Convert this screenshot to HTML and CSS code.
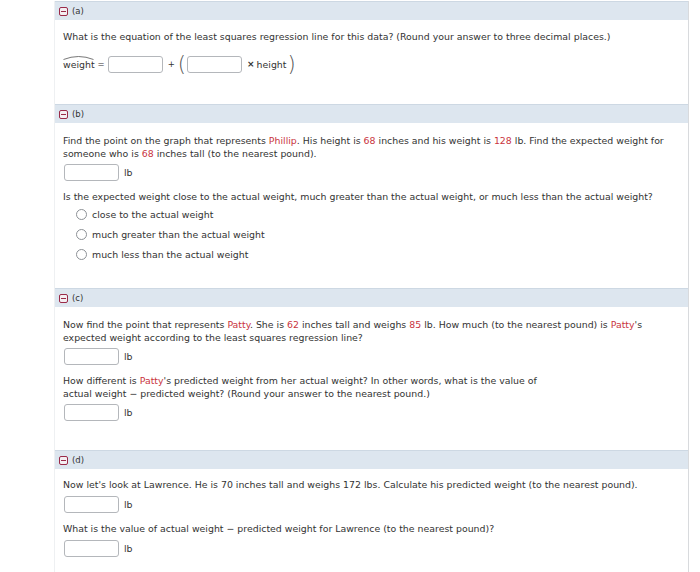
FILE: index.html
```html
<!DOCTYPE html>
<html>
<head>
<meta charset="utf-8">
<link rel="stylesheet" href="styles.css">
</head>
<body>
<div class="panel">
  <section class="part part-a">
    <div class="part-head"><span class="toggle"></span><span class="label">(a)</span></div>
    <div class="part-body">
      <p class="line">What is the equation of the least squares regression line for this data? (Round your answer to three decimal places.)</p>
      <div class="eq">
        <span class="hat"><svg class="hat-svg" width="31" height="5" viewBox="0 0 31 5"><path d="M0.5 4.5 Q15.5 -1.5 30.5 4.5" fill="none" stroke="#555" stroke-width="0.8"/></svg><span>weight</span></span>
        <span class="eq-sym">=</span>
        <span class="box box-eq"></span>
        <span class="eq-plus">+</span>
        <span class="paren">(</span>
        <span class="box box-eq"></span>
        <span class="times">×</span><span class="eq-word">height</span>
        <span class="paren paren-r">)</span>
      </div>
    </div>
  </section>

  <section class="part part-b">
    <div class="part-head"><span class="toggle"></span><span class="label">(b)</span></div>
    <div class="part-body">
      <p class="line">Find the point on the graph that represents <span class="red">Phillip</span>. His height is <span class="red">68</span> inches and his weight is <span class="red">128</span> lb. Find the expected weight for<br>someone who is <span class="red">68</span> inches tall (to the nearest pound).</p>
      <div class="answer"><span class="box"></span><span class="unit">lb</span></div>
      <p class="line q2">Is the expected weight close to the actual weight, much greater than the actual weight, or much less than the actual weight?</p>
      <ul class="radios">
        <li><span class="radio"></span>close to the actual weight</li>
        <li><span class="radio"></span>much greater than the actual weight</li>
        <li><span class="radio"></span>much less than the actual weight</li>
      </ul>
    </div>
  </section>

  <section class="part part-c">
    <div class="part-head"><span class="toggle"></span><span class="label">(c)</span></div>
    <div class="part-body">
      <p class="line">Now find the point that represents <span class="red">Patty</span>. She is <span class="red">62</span> inches tall and weighs <span class="red">85</span> lb. How much (to the nearest pound) is <span class="red">Patty</span>'s<br>expected weight according to the least squares regression line?</p>
      <div class="answer"><span class="box"></span><span class="unit">lb</span></div>
      <p class="line q2">How different is <span class="red">Patty</span>'s predicted weight from her actual weight? In other words, what is the value of<br>actual weight − predicted weight? (Round your answer to the nearest pound.)</p>
      <div class="answer"><span class="box"></span><span class="unit">lb</span></div>
    </div>
  </section>

  <section class="part part-d">
    <div class="part-head"><span class="toggle"></span><span class="label">(d)</span></div>
    <div class="part-body">
      <p class="line">Now let's look at Lawrence. He is 70 inches tall and weighs 172 lbs. Calculate his predicted weight (to the nearest pound).</p>
      <div class="answer"><span class="box"></span><span class="unit">lb</span></div>
      <p class="line q2">What is the value of actual weight − predicted weight for Lawrence (to the nearest pound)?</p>
      <div class="answer"><span class="box"></span><span class="unit">lb</span></div>
    </div>
  </section>
</div>
</body>
</html>
```
FILE: styles.css
```css
* { box-sizing: border-box; }
html, body { margin: 0; padding: 0; background: #fff; }
body {
  font-family: "DejaVu Sans", Verdana, sans-serif;
  font-size: 9.4px;
  color: #333;
  padding-top: 1px;
  height: 572px;
  overflow: hidden;
}
.panel {
  margin-left: 54px;
  width: 635px;
  min-height: 571px;
  border-left: 1px solid #eef0f2;
  border-right: 1px solid #d8dadd;
}
.part-head {
  height: 19px;
  background: #dde6ef;
  border-top: 1px solid #cdd8e3;
  display: flex;
  align-items: center;
  padding-left: 4px;
  gap: 4px;
}
.toggle {
  width: 9px;
  height: 9px;
  border: 1px solid #9a2a48;
  border-radius: 2px;
  display: flex;
  align-items: center;
  justify-content: center;
  background: #f4eef2;
}
.toggle::after {
  content: "";
  width: 5px;
  height: 1px;
  background: #9a2a48;
}
.label { font-size: 8.5px; color: #333; }
.part-body { padding: 0 10px 0 8px; }
.line { margin: 0; line-height: 13px; }
.red { color: #c9343e; }

.part-a .part-body { padding-top: 10px; padding-bottom: 30px; }
.eq {
  margin-top: 11px;
  height: 20px;
  display: flex;
  align-items: center;
}
.hat { display: inline-flex; flex-direction: column; align-items: center; margin-top: -4px; }
.hat-svg { display: block; margin-bottom: -1px; }
.eq-sym { margin: 0 3px 0 3px; font-size: 8.5px; }
.box {
  display: inline-block;
  width: 55px;
  height: 17px;
  border: 1px solid #b4b7bb;
  border-radius: 3px;
  background: #fff;
}
.eq-plus { margin: 0 3px 0 5px; font-size: 8.5px; }
.paren {
  font-size: 21px;
  font-weight: 200;
  line-height: 20px;
  color: #555;
  margin-right: 1px;
  font-family: "DejaVu Sans", sans-serif;
}
.paren-r { margin-left: 1px; margin-right: 0; }
.times { font-weight: bold; margin-left: 5px; margin-right: 2px; font-size: 9px; }

.part-b .part-body { padding-top: 11px; padding-bottom: 24px; }
.part-c .part-body { padding-top: 11px; padding-bottom: 29px; }
.part-d .part-body { padding-top: 9px; }

.answer {
  display: flex;
  align-items: center;
  margin-top: 4px;
  height: 17px;
  padding-left: 1px;
}
.part-d .answer { margin-top: 5px; }
.unit { margin-left: 5px; }
.q2 { margin-top: 9px; }
.radios { list-style: none; margin: 1px 0 0; padding: 0 0 0 13px; }
.radios li {
  height: 20px;
  display: flex;
  align-items: center;
}
.radio {
  width: 11px;
  height: 11px;
  border: 1px solid #8d9196;
  border-radius: 50%;
  margin-right: 5px;
  background: #fff;
}
```
